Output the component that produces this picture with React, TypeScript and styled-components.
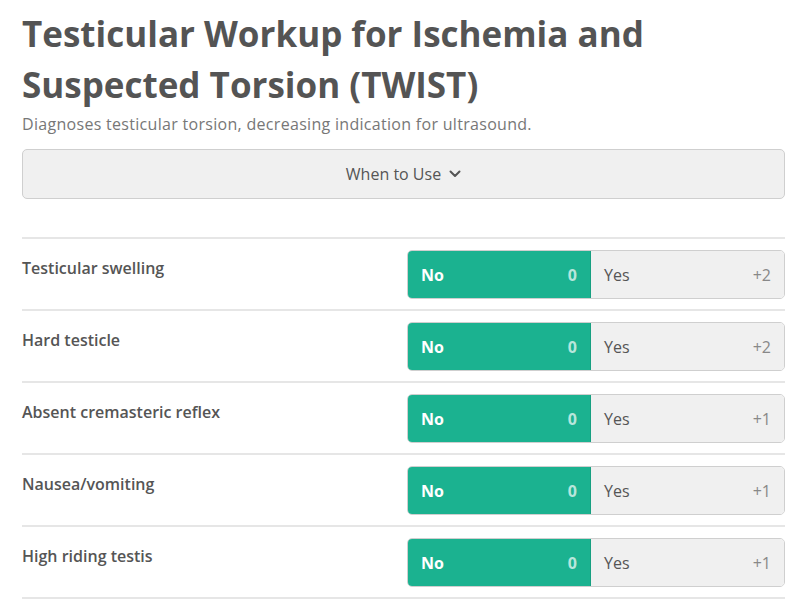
import React from "react";
import styled, { createGlobalStyle } from "styled-components";

const Global = createGlobalStyle`
  html, body { margin: 0; padding: 0; background: #fff; }
  body { font-family: "Open Sans", "Noto Sans", sans-serif; color: #555; }
`;

const Page = styled.div`
  padding: 0 20px 0 22px;
`;

const Title = styled.h1`
  margin: 0;
  padding-top: 8px;
  max-width: 700px;
  font-size: 35px;
  line-height: 51px;
  font-weight: 700;
  color: #545454;
  letter-spacing: 0;
`;

const Subtitle = styled.p`
  margin: 3px 0 0;
  font-size: 16px;
  line-height: 22px;
  letter-spacing: 0.3px;
  color: #777;
`;

const WhenButton = styled.button`
  display: flex;
  align-items: center;
  justify-content: center;
  gap: 8px;
  width: 100%;
  height: 50px;
  margin-top: 14px;
  border: 1px solid #cfcfcf;
  border-radius: 5px;
  background: #f0f0f0;
  font-family: inherit;
  font-size: 16px;
  color: #555;
  cursor: pointer;
`;

const List = styled.div`
  margin-top: 38px;
  border-top: 2px solid #e6e6e6;
`;

const Row = styled.div`
  display: flex;
  justify-content: space-between;
  align-items: flex-start;
  padding: 11px 0 10px;
  border-bottom: 2px solid #e6e6e6;
`;

const Label = styled.div`
  padding-top: 8px;
  font-size: 16px;
  line-height: 20px;
  font-weight: 600;
  color: #555;
`;

const Toggle = styled.div`
  display: flex;
  width: 378px;
  height: 49px;
  box-sizing: border-box;
  border: 1px solid #cfcfcf;
  border-radius: 5px;
  overflow: hidden;
`;

const Segment = styled.div<{ $active?: boolean; $width?: number }>`
  display: flex;
  align-items: center;
  justify-content: space-between;
  box-sizing: border-box;
  padding: 0 13px 0 13px;
  ${(p) => (p.$width ? `width: ${p.$width}px;` : "flex: 1;")}
  background: ${(p) => (p.$active ? "#1bb290" : "#f0f0f0")};
  border-right: ${(p) => (p.$active ? "1px solid #17a081" : "none")};
  font-size: 16px;
`;

const SegLabel = styled.span<{ $active?: boolean }>`
  font-weight: ${(p) => (p.$active ? 700 : 400)};
  color: ${(p) => (p.$active ? "#fff" : "#555")};
`;

const Points = styled.span<{ $active?: boolean }>`
  font-weight: ${(p) => (p.$active ? 700 : 400)};
  color: ${(p) => (p.$active ? "rgba(255,255,255,0.7)" : "#888")};
`;

const Chevron = () => (
  <svg width="12" height="8" viewBox="0 0 12 8" fill="none">
    <path d="M1.5 1.5 L6 6 L10.5 1.5" stroke="#555" strokeWidth="2" strokeLinecap="round" strokeLinejoin="round" />
  </svg>
);

const items = [
  { label: "Testicular swelling", pts: 2 },
  { label: "Hard testicle", pts: 2 },
  { label: "Absent cremasteric reflex", pts: 1 },
  { label: "Nausea/vomiting", pts: 1 },
  { label: "High riding testis", pts: 1 },
];

export default function App() {
  return (
    <Page>
      <Global />
      <Title>Testicular Workup for Ischemia and Suspected Torsion (TWIST)</Title>
      <Subtitle>Diagnoses testicular torsion, decreasing indication for ultrasound.</Subtitle>
      <WhenButton>
        When to Use <Chevron />
      </WhenButton>
      <List>
        {items.map((it) => (
          <Row key={it.label}>
            <Label>{it.label}</Label>
            <Toggle>
              <Segment $active $width={183}>
                <SegLabel $active>No</SegLabel>
                <Points $active>0</Points>
              </Segment>
              <Segment>
                <SegLabel>Yes</SegLabel>
                <Points>+{it.pts}</Points>
              </Segment>
            </Toggle>
          </Row>
        ))}
      </List>
    </Page>
  );
}
